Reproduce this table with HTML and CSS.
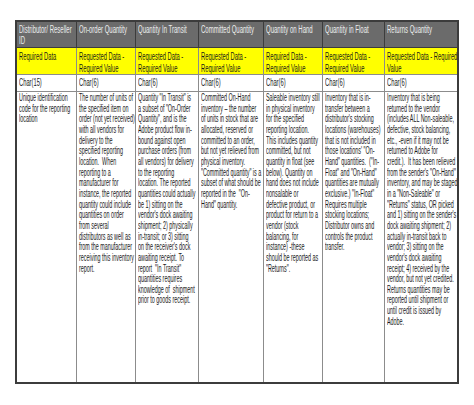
FILE: index.html
```html
<!DOCTYPE html>
<html>
<head>
<meta charset="utf-8">
<link rel="stylesheet" href="styles.css">
</head>
<body>
<table class="spec">
  <colgroup>
    <col class="c1"><col class="c2"><col class="c3"><col class="c4"><col class="c5"><col class="c6"><col class="c7">
  </colgroup>
  <tr class="head">
    <td><div class="t">Distributor/ Reseller<br>ID</div></td>
    <td><div class="t">On-order Quantity</div></td>
    <td><div class="t">Quantity In Transit</div></td>
    <td><div class="t">Committed Quantity</div></td>
    <td><div class="t">Quantity on Hand</div></td>
    <td><div class="t">Quantity in Float</div></td>
    <td><div class="t">Returns Quantity</div></td>
  </tr>
  <tr class="req">
    <td><div class="t">Required Data</div></td>
    <td><div class="t">Requested Data -<br>Required Value</div></td>
    <td><div class="t">Requested Data -<br>Required Value</div></td>
    <td><div class="t">Requested Data -<br>Required Value</div></td>
    <td><div class="t">Required Data -<br>Required Value</div></td>
    <td><div class="t">Requested Data -<br>Required Value</div></td>
    <td><div class="t">Requested Data - Required<br>Value</div></td>
  </tr>
  <tr class="type">
    <td><div class="t">Char(15)</div></td>
    <td><div class="t">Char(6)</div></td>
    <td><div class="t">Char(6)</div></td>
    <td><div class="t">Char(6)</div></td>
    <td><div class="t">Char(6)</div></td>
    <td><div class="t">Char(6)</div></td>
    <td><div class="t">Char(6)</div></td>
  </tr>
  <tr class="desc">
    <td><div class="t">Unique identification<br>code for the reporting<br>location</div></td>
    <td><div class="t">The number of units of<br>the specified item on<br>order (not yet received)<br>with all vendors for<br>delivery to the<br>specified reporting<br>location.&nbsp; When<br>reporting to a<br>manufacturer for<br>instance, the reported<br>quantity could include<br>quantities on order<br>from several<br>distributors as well as<br>from the manufacturer<br>receiving this inventory<br>report.</div></td>
    <td><div class="t">Quantity "In Transit" is<br>a subset of "On-Order<br>Quantity", and is the<br>Adobe product flow in-<br>bound against open<br>purchase orders (from<br>all vendors) for delivery<br>to the reporting<br>location. The reported<br>quantities could actually<br>be 1) sitting on the<br>vendor's dock awaiting<br>shipment; 2) physically<br>in-transit; or 3) sitting<br>on the receiver's dock<br>awaiting receipt. To<br>report&nbsp; "In Transit"<br>quantities requires<br>knowledge of&nbsp; shipment<br>prior to goods receipt.</div></td>
    <td><div class="t">Committed On-Hand<br>inventory – the number<br>of units in stock that are<br>allocated, reserved or<br>committed to an order,<br>but not yet relieved from<br>physical inventory.<br>"Committed quantity" is a<br>subset of what should be<br>reported in the&nbsp; "On-<br>Hand" quantity.</div></td>
    <td><div class="t">Saleable inventory still<br>in physical inventory<br>for the specified<br>reporting location.<br>This includes quantity<br>committed, but not<br>quantity in float (see<br>below). Quantity on<br>hand does not include<br>nonsalable or<br>defective product, or<br>product for return to a<br>vendor (stock<br>balancing, for<br>instance) -these<br>should be reported as<br>"Returns".</div></td>
    <td><div class="t">Inventory that is in-<br>transfer between a<br>distributor's stocking<br>locations (warehouses)<br>that is not included in<br>those locations' "On-<br>Hand" quantities.&nbsp; ("In-<br>Float" and "On-Hand"<br>quantities are mutually<br>exclusive.) "In-Float"<br>Requires multiple<br>stocking locations;<br>Distributor owns and<br>controls the product<br>transfer.</div></td>
    <td><div class="t">Inventory that is being<br>returned to the vendor<br>(includes ALL Non-saleable,<br>defective, stock balancing,<br>etc., -even if it may not be<br>returned to Adobe for<br>credit.).&nbsp; It has been relieved<br>from the sender's "On-Hand"<br>inventory, and may be staged<br>in a "Non-Saleable" or<br>"Returns" status, OR picked<br>and 1) sitting on the sender's<br>dock awaiting shipment; 2)<br>actually in-transit back to<br>vendor; 3) sitting on the<br>vendor's dock awaiting<br>receipt; 4) received by the<br>vendor, but not yet credited.<br>Returns quantities may be<br>reported until shipment or<br>until credit is issued by<br>Adobe.</div></td>
  </tr>
</table>
</body>
</html>
```
FILE: styles.css
```css
html, body {
  margin: 0;
  padding: 0;
  background: #ffffff;
}
body {
  padding: 20px 0 0 15px;
  font-family: "Liberation Sans", Arial, sans-serif;
  overflow: hidden;
}
.spec {
  border-collapse: collapse;
  table-layout: fixed;
  width: 442px;
  border: 2px solid #3c3c3c;
}
.c1 { width: 60px; }
.c2 { width: 59px; }
.c3 { width: 63px; }
.c4 { width: 65px; }
.c5 { width: 59px; }
.c6 { width: 62px; }
.c7 { width: 74px; }
.spec td {
  border: 1px solid #8c8c8c;
  vertical-align: top;
  padding: 1px 2px 0 2px;
  overflow: hidden;
}
.t {
  white-space: nowrap;
  transform: scaleX(0.54);
  transform-origin: 0 0;
  font-size: 10px;
  line-height: 10.65px;
  color: #1a1a1a;
}
.head td {
  background: #6b6b6b;
  height: 23px;
  border-color: #3c3c3c;
  padding-top: 2px;
}
.head .t {
  color: #ededed;
  font-size: 10px;
  line-height: 11px;
  transform: scaleX(0.6);
}
.req td {
  background: #ffff00;
  height: 24px;
  padding-top: 2px;
}
.req .t {
  font-size: 10.5px;
  line-height: 12px;
  transform: scaleX(0.55);
}
.type td {
  height: 15px;
  padding-top: 1px;
}
.type .t {
  font-size: 10.5px;
  line-height: 12px;
  transform: scaleX(0.55);
}
.desc td {
  height: 289px;
  padding-top: 1px;
}
```
